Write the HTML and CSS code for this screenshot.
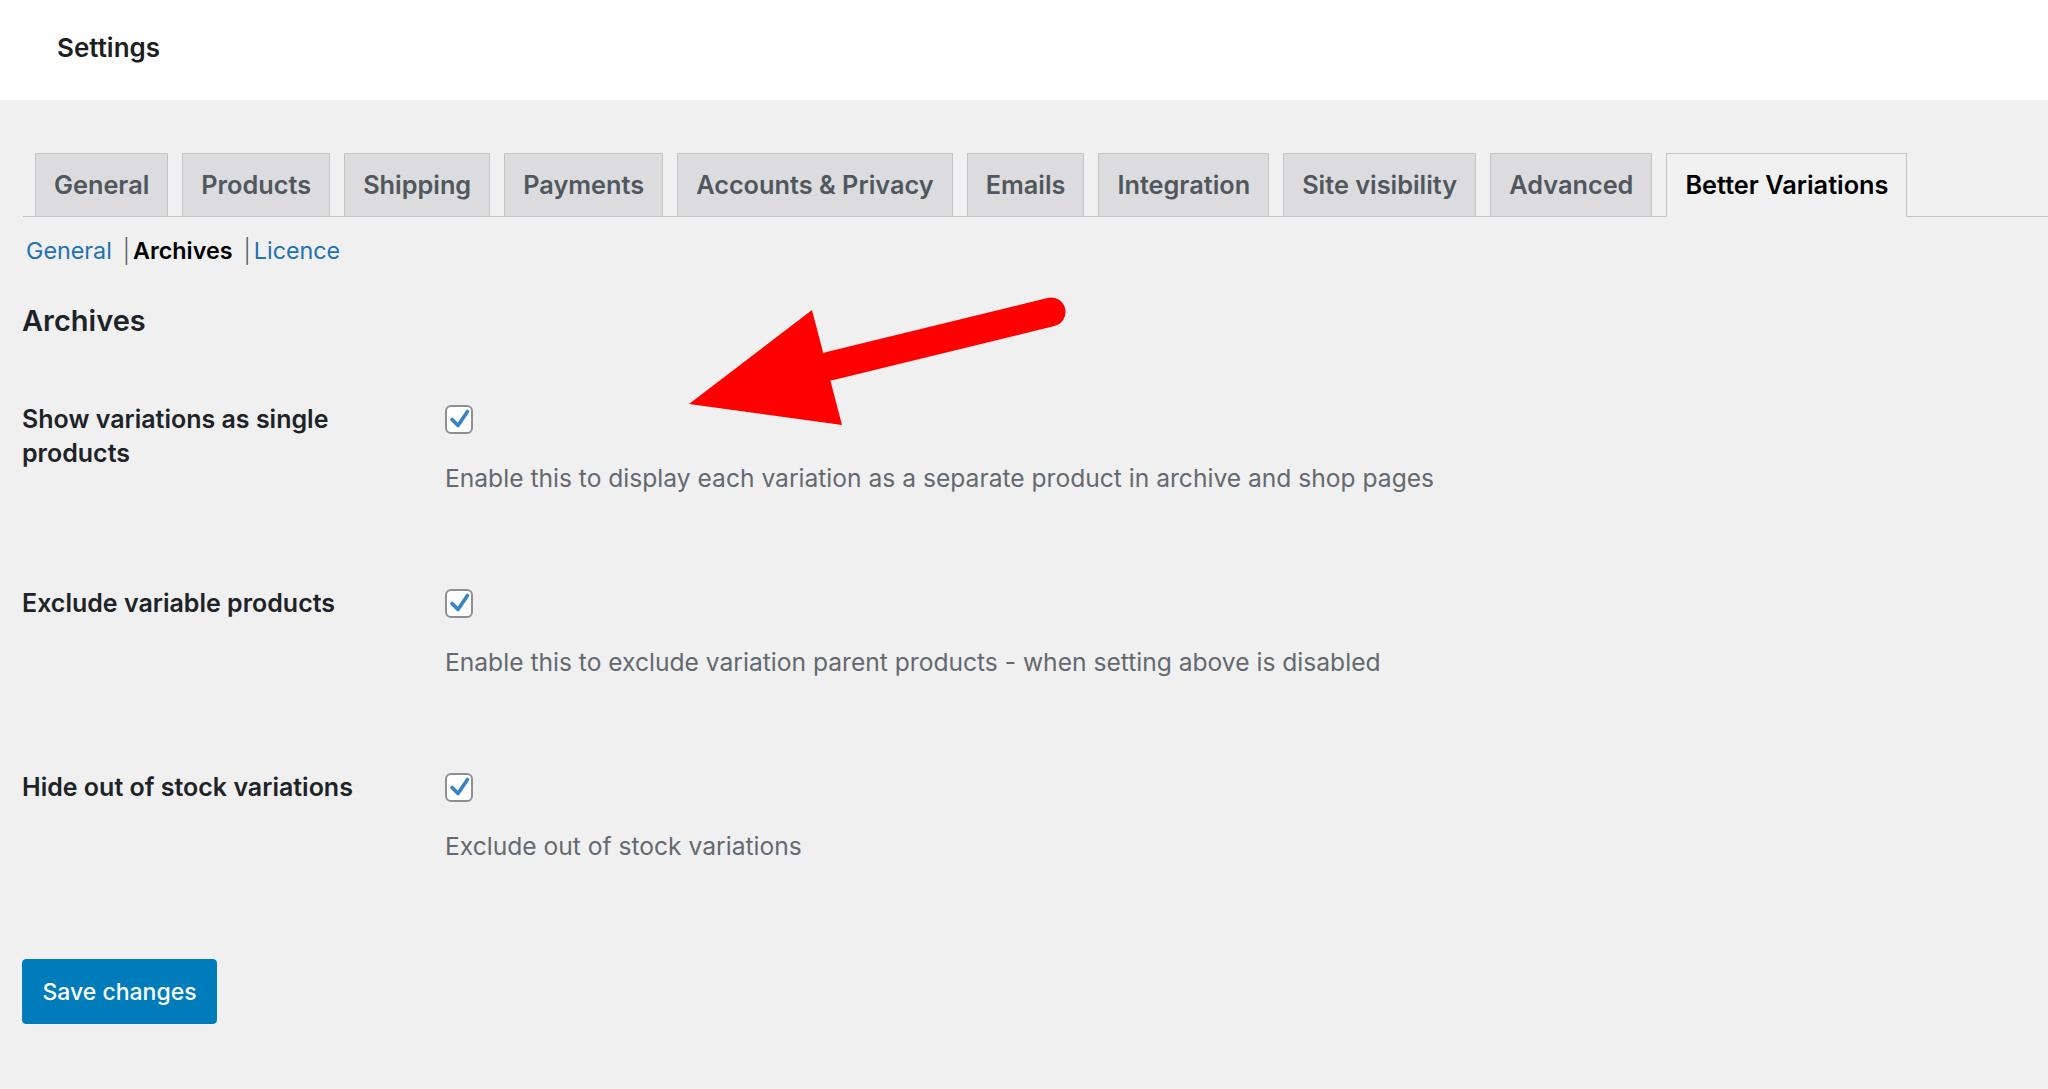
FILE: index.html
```html
<!DOCTYPE html>
<html lang="en">
<head>
    <meta charset="UTF-8">
    <meta name="viewport" content="width=device-width, initial-scale=1.0">
    <title>Settings</title>
    <link rel="stylesheet" href="styles.css">
</head>
<body>
    <div class="page">
        <header class="top-bar">
            <h1>Settings</h1>
        </header>

        <div class="wrap">
            <nav class="nav-tab-wrapper">
                <a href="#" class="nav-tab">General</a>
                <a href="#" class="nav-tab">Products</a>
                <a href="#" class="nav-tab">Shipping</a>
                <a href="#" class="nav-tab">Payments</a>
                <a href="#" class="nav-tab">Accounts &amp; Privacy</a>
                <a href="#" class="nav-tab">Emails</a>
                <a href="#" class="nav-tab">Integration</a>
                <a href="#" class="nav-tab">Site visibility</a>
                <a href="#" class="nav-tab">Advanced</a>
                <a href="#" class="nav-tab nav-tab-active">Better Variations</a>
            </nav>

            <ul class="subsubsub">
                <li><a href="#">General</a></li>
                <li><span class="sep">|</span><a href="#" class="current">Archives</a></li>
                <li><span class="sep">|</span><a href="#">Licence</a></li>
            </ul>

            <h2>Archives</h2>

            <table class="form-table">
                <tr>
                    <th>Show variations as single products</th>
                    <td>
                        <div class="check-row">
                            <span class="checkbox">
                                <svg viewBox="0 0 28 28"><polyline points="7,14.5 13,20.5 22.5,6.5"/></svg>
                            </span>
                        </div>
                        <p class="description">Enable this to display each variation as a separate product in archive and shop pages</p>
                    </td>
                </tr>
                <tr>
                    <th>Exclude variable products</th>
                    <td>
                        <div class="check-row">
                            <span class="checkbox">
                                <svg viewBox="0 0 28 28"><polyline points="7,14.5 13,20.5 22.5,6.5"/></svg>
                            </span>
                        </div>
                        <p class="description">Enable this to exclude variation parent products - when setting above is disabled</p>
                    </td>
                </tr>
                <tr>
                    <th>Hide out of stock variations</th>
                    <td>
                        <div class="check-row">
                            <span class="checkbox">
                                <svg viewBox="0 0 28 28"><polyline points="7,14.5 13,20.5 22.5,6.5"/></svg>
                            </span>
                        </div>
                        <p class="description">Exclude out of stock variations</p>
                    </td>
                </tr>
            </table>

            <button class="button-primary">Save changes</button>
        </div>

        <!-- annotation arrow drawn over the screenshot -->
        <svg class="arrow" viewBox="0 0 2048 1089">
            <line x1="830" y1="366" x2="1051" y2="312" stroke="#ff0000" stroke-width="29" stroke-linecap="round"/>
            <polygon points="689,404 812,310 842,425" fill="#ff0000"/>
        </svg>
    </div>
</body>
</html>
```

FILE: styles.css
```css
body {
    margin: 0;
    background: #f0f0f1;
    font-family: Inter, "Noto Sans", Arial, sans-serif;
    color: #1d2327;
}
.page {
    position: relative;
    min-height: 1089px;
}
.top-bar {
    height: 94px;
    background: #fff;
    display: flex;
    align-items: center;
    padding: 0 0 6px 57px;
}
.top-bar h1 {
    margin: 0;
    font-size: 26px;
    font-weight: 600;
    color: #1e1e1e;
}
.wrap {
    padding-left: 22px;
}
.nav-tab-wrapper {
    display: flex;
    margin: 53px 0 0 1px;
    padding-left: 12px;
    border-bottom: 1px solid #c3c4c7;
}
.nav-tab {
    display: block;
    height: 62px;
    line-height: 62px;
    padding: 0 18px;
    margin-right: 14px;
    margin-bottom: -1px;
    background: #dcdcde;
    border: 1px solid #c3c4c7;
    color: #50575e;
    font-size: 25.3px;
    font-weight: 600;
    text-decoration: none;
    white-space: nowrap;
}
.nav-tab-active {
    background: #f0f0f1;
    border-bottom-color: #f0f0f1;
    color: #000;
}
.subsubsub {
    list-style: none;
    margin: 19px 0 0 4px;
    padding: 0;
    display: flex;
    font-size: 23.3px;
    line-height: 30px;
}
.subsubsub a {
    color: #2271b1;
    text-decoration: none;
}
.subsubsub a.current {
    color: #000;
    font-weight: 600;
}
.subsubsub .sep {
    color: #50575e;
    font-weight: 300;
    margin: 0 3px 0 11px;
}
h2 {
    margin: 37px 0 0;
    font-size: 29px;
    line-height: 36px;
    font-weight: 600;
}
.form-table {
    border-collapse: collapse;
    table-layout: fixed;
    margin-top: 16px;
}
.form-table th {
    width: 400px;
    padding: 47px 23px 46px 0;
    text-align: left;
    vertical-align: top;
    font-size: 25px;
    line-height: 34px;
    font-weight: 600;
}
.form-table td {
    width: 1500px;
    padding: 47px 0 46px;
    vertical-align: top;
}
.check-row {
    height: 34px;
    display: flex;
    align-items: center;
}
.checkbox {
    width: 28px;
    height: 29px;
    box-sizing: border-box;
    border: 2px solid #8c8f94;
    border-radius: 6px;
    background: #fff;
    position: relative;
}
.checkbox svg {
    position: absolute;
    left: -2px;
    top: -2px;
    width: 28px;
    height: 28px;
    fill: none;
    stroke: #3582c4;
    stroke-width: 3.6;
    stroke-linecap: round;
    stroke-linejoin: round;
}
.description {
    margin: 27px 0 0;
    font-size: 24.6px;
    line-height: 30px;
    color: #646970;
}
.button-primary {
    margin-top: 52px;
    height: 65px;
    width: 195px;
    padding: 0;
    background: #007cba;
    border: 1px solid #007cba;
    border-radius: 4px;
    color: #fff;
    font-family: inherit;
    font-size: 23px;
    font-weight: 500;
    cursor: pointer;
}
.arrow {
    position: absolute;
    left: 0;
    top: 0;
    width: 2048px;
    height: 1089px;
    pointer-events: none;
}
```
